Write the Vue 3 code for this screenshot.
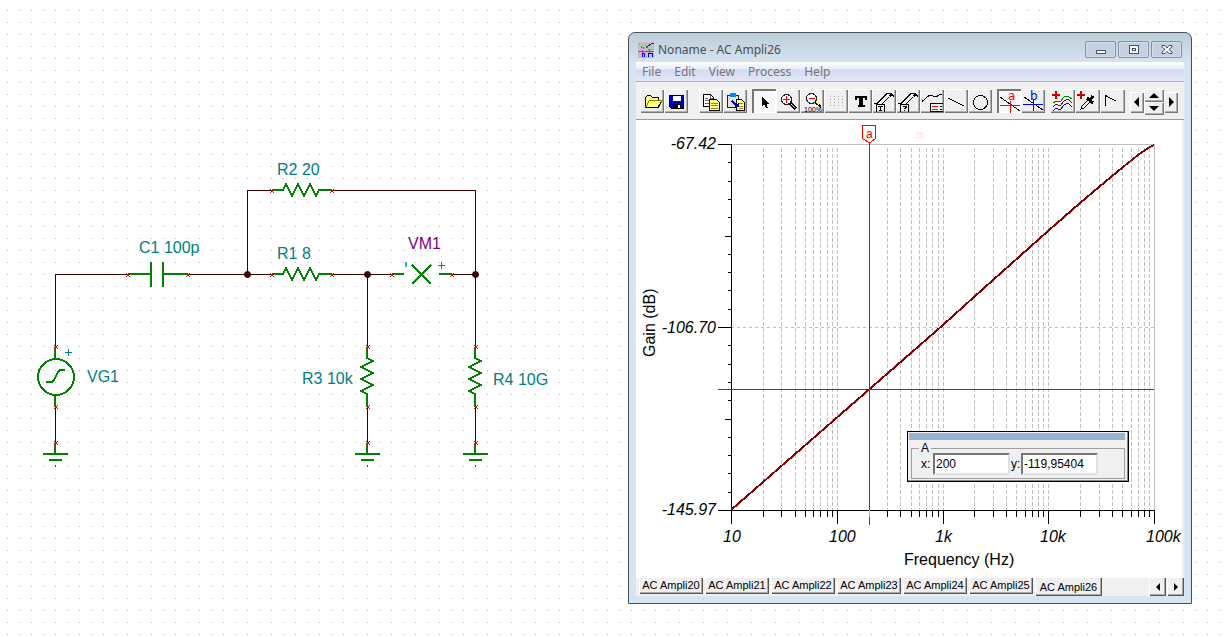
<script setup>
import { ref } from 'vue'

const X0 = 95
const DECADE = 105.75
const TOP = 24
const BOTTOM = 390

const xAt = (hz) => Math.round(X0 + Math.log10(hz / 10) * DECADE) + 0.5

const gridX = []
for (let d = 0; d < 4; d++) {
  for (let m = 1; m < 10; m++) {
    if (d || m > 1) gridX.push({ x: xAt(m * 10 ** (d + 1)), major: m === 1 })
  }
}
const ticksX = [{ x: X0 + 0.5, major: true }, ...gridX, { x: xAt(100000), major: true }]
const ticksY = Array.from({ length: 21 }, (_, i) => ({
  y: Math.round(TOP + (i * (BOTTOM - TOP)) / 20) + 0.5,
  len: i % 10 === 0 ? 13 : i % 5 === 0 ? 6 : 3,
}))

const yLabels = [
  { t: '-67.42', y: 29 },
  { t: '-106.70', y: 213 },
  { t: '-145.97', y: 395 },
]
const xLabels = [
  { t: '10', x: 87 },
  { t: '100', x: 193 },
  { t: '1k', x: 299 },
  { t: '10k', x: 404 },
  { t: '100k', x: 510 },
]

const menus = ['File', 'Edit', 'View', 'Process', 'Help']
const tabs = [20, 21, 22, 23, 24, 25, 26].map((n) => `AC Ampli${n}`)
const active = ref('AC Ampli26')
const ax = ref('200')
const ay = ref('-119,95404')

const pins = [
  [128, 274], [188, 274], [272, 274], [332, 274], [392, 274], [452, 274], [272, 190], [332, 190],
  [56, 346], [56, 406], [56, 442], [368, 346], [368, 406], [368, 442], [476, 346], [476, 406], [476, 442],
]
const labels = [
  { t: 'C1 100p', x: 139, y: 253 },
  { t: 'R2 20', x: 277, y: 175 },
  { t: 'R1 8', x: 277, y: 259 },
  { t: 'VG1', x: 87, y: 382 },
  { t: 'R3 10k', x: 302, y: 384 },
  { t: 'R4 10G', x: 493, y: 385 },
]
</script>

<template>
  <main class="desk">
    <svg class="schematic" viewBox="0 0 628 637" role="img" aria-label="Circuit schematic">
      <g class="wire">
        <path d="M55.5 347V274.5H128M188 274.5H272M332 274.5H392M452 274.5H475.5M247.5 274V190.5H272M332 190.5H475.5V347" />
        <path d="M55.5 407V443M367.5 274V347M367.5 407V443M475.5 407V443" />
      </g>
      <g class="part">
        <path d="M128 274H151M163 274H188M151 262V287M163 262V287" />
        <path d="M55 347V358M55 396V407M46 382H52L54 380L58 372L60 370H65" />
        <circle cx="56" cy="377" r="18" />
        <path v-for="y in [190, 274]" :key="y" :transform="`translate(272 ${y})`" d="M0 0H11L14 -6L20 6L26 -6L32 6L38 -6L44 6L47 0H60" />
        <path v-for="x in [367, 475]" :key="x" :transform="`translate(${x} 347)`" d="M0 0V11L6 14L-6 20L6 26L-6 32L6 38L-6 44L0 47V60" />
        <path v-for="x in [55, 367, 475]" :key="'g' + x" :transform="`translate(${x} 443)`" d="M0 0V11M-12 11H13M-6 17H7M0 23H1" />
        <path d="M392 274H404M439 274H452M412 265L431 284M431 265L412 284" />
      </g>
      <g class="joint">
        <circle cx="247.5" cy="274.5" r="3" />
        <circle cx="367.5" cy="274.5" r="3" />
        <circle cx="475.5" cy="274.5" r="3" />
      </g>
      <path v-for="(p, i) in pins" :key="i" class="pin" :transform="`translate(${p[0]} ${p[1]})`" d="M-2 -1L2 3M2 -1L-2 3" />
      <path class="sign" d="M65 352.500H72M68.500 349V356M438 265.500H445M441.500 262V269" />
      <path class="minus" d="M406 262V267" />
      <text v-for="l in labels" :key="l.t" :x="l.x" :y="l.y">{{ l.t }}</text>
      <text class="meter" x="408" y="249">VM1</text>
    </svg>

    <section class="window" aria-label="Noname - AC Ampli26">
      <header class="title">
        <svg class="logo" viewBox="0 0 16 16" width="16" height="16" aria-hidden="true">
          <path d="M0 0H16V16H0Z" fill="#c0c0c0" />
          <g fill="none" stroke-width="1">
            <path d="M1 2L5 6.500L8 3L10 7H14" stroke="#0c3" stroke-dasharray="2 1" />
            <path d="M8 6L12 2.500L16 1" stroke="#800060" />
            <path d="M0 9.500H16M4.500 8V11M11.500 8V11" stroke="#f0f" />
            <path d="M4.500 15V11.500H6.500V15M10.500 15V11.500H14.500V15" stroke="#00f" />
          </g>
        </svg>
        <h1>Noname - AC Ampli26</h1>
        <div class="caption">
          <button type="button" aria-label="Minimize">
            <svg viewBox="0 0 12 10" width="12" height="10"><rect x="1.500" y="5.500" width="9" height="3" /></svg>
          </button>
          <button type="button" aria-label="Restore">
            <svg viewBox="0 0 12 10" width="12" height="10"><rect x="1.500" y=".5" width="9" height="8" /><rect x="4.500" y="3.500" width="3" height="2" /></svg>
          </button>
          <button type="button" aria-label="Close">
            <svg viewBox="0 0 12 10" width="12" height="10"><path d="M1 .5H4L6 3L8 .5H11V2L8 4.500L11 7V8.500H8L6 6.500L4 8.500H1V7L4 4.500L1 2Z" /></svg>
          </button>
        </div>
      </header>

      <nav class="menu" aria-label="Menu">
        <button v-for="m in menus" :key="m" type="button">{{ m }}</button>
      </nav>

      <div class="toolbar" role="toolbar" aria-label="Diagram tools">
        <div class="group">
          <button type="button" aria-label="Open">
            <svg viewBox="0 0 24 24"><path d="M5.500 18.500V8.500L7.500 6.500H10.500L12.500 8.500H18.500V11.500" fill="#ff8" stroke="#000" /><path d="M5.500 18.500L9.500 11.500H22.500L18.500 18.500Z" fill="#ffff80" stroke="#880" /><path d="M5 18.500H18L21 13" fill="none" stroke="#000" /></svg>
          </button>
          <button type="button" aria-label="Save">
            <svg viewBox="0 0 24 24"><path d="M5.500 6.500H19.500V19.500H7.500L5.500 17.500Z" fill="#00c" stroke="#000" /><path d="M9 7H17V12H9Z" fill="#fff" /><path d="M9 15H17V19H9Z" fill="#000" /><path d="M14 16H16V19H14Z" fill="#fff" /></svg>
          </button>
        </div>
        <div class="group copy">
          <button type="button" aria-label="Copy">
            <svg viewBox="0 0 24 24"><path d="M4.500 5.500H11.500L14.500 8.500V17.500H4.500Z" fill="#fff" stroke="#000" /><path d="M11 5.500V9H14M6 9.500H9M6 11.500H10M6 14.500H10" fill="none" stroke="#666" /><path d="M10.500 10.500H17.500L20.500 13.500V21.500H10.500Z" fill="#ff8" stroke="#000" /><path d="M12 14.500H19M12 16.500H19M12 19.500H19" stroke="#a80" /></svg>
          </button>
          <button type="button" aria-label="Paste">
            <svg viewBox="0 0 24 24"><path d="M4.500 6.500H15.500V18.500H4.500Z" fill="#e4e4e4" stroke="#222" /><path d="M7 4H13V8H7Z" fill="#08f" /><path d="M13.500 10.500H18.500L21.500 13.500V21.500H13.500Z" fill="#ff8" stroke="#000" /><path d="M16 14.500H20M16 17.500H20M16 19.500H20" stroke="#a80" /><path d="M9 12L14 17" stroke="#00a" stroke-width="2" /><path d="M16 13V18H11Z" fill="#00a" /></svg>
          </button>
        </div>
        <div class="group">
          <button type="button" class="down" aria-label="Select" aria-pressed="true">
            <svg viewBox="0 0 24 24"><path d="M10 8V17L12 15L14 19H16L14.500 15H17Z" fill="#000" /></svg>
          </button>
          <button type="button" aria-label="Zoom in">
            <svg viewBox="0 0 24 24"><circle cx="10.500" cy="10.500" r="5" fill="#fff" stroke="#222" /><path d="M7 10.500H14M10.500 7V14" stroke="#f00" /><path d="M14.500 14.500L20 20" stroke="#000" stroke-width="3" /><path d="M15 15L19 19" stroke="#ff0" /></svg>
          </button>
          <button type="button" aria-label="Zoom 100%">
            <svg viewBox="0 0 24 24"><circle cx="11.500" cy="9.500" r="5" fill="#fff" stroke="#222" /><path d="M8.500 9.500H15" stroke="#f00" /><path d="M15 13L21 18" stroke="#000" stroke-width="2" /><path d="M16 13L19 16" stroke="#ff0" /><text x="4" y="23" class="tiny">100%</text></svg>
          </button>
          <button type="button" aria-label="Grid">
            <svg viewBox="0 0 24 24"><path v-for="y in [7.5, 10.5, 13.5, 16.5]" :key="y" :d="`M6 ${y}H19`" stroke="#aaa" stroke-dasharray="1 3" /></svg>
          </button>
          <button type="button" aria-label="Text">
            <svg viewBox="0 0 24 24"><path d="M7 7H19V11H17.500L17 9H15V16H16.500V18H9.500V16H11V9H9L8.500 11H7Z" fill="#000" /></svg>
          </button>
          <button type="button" aria-label="Curve label">
            <svg viewBox="0 0 24 24"><g fill="none" stroke="#000"><path d="M2 14.500H5L12 7.500L15 4.500H19L22 7.500M10 15L17 8" /><path d="M4.500 22.500V15.500H12.500V22.500" /><path d="M6 17.500H11M8.500 17V22M7 21.500H10" /></g><path d="M16 6L20 5L19 9Z" fill="#000" /></svg>
          </button>
          <button type="button" aria-label="Curve query">
            <svg viewBox="0 0 24 24"><g fill="none" stroke="#000"><path d="M2 14.500H5L12 7.500L15 4.500H19L22 7.500M10 15L17 8" /><path d="M4.500 22.500V15.500H12.500V22.500" /><path d="M7 17.500H10.500V18.500L8.500 19.500V20M8.500 21V22" /></g><path d="M16 6L20 5L19 9Z" fill="#000" /></svg>
          </button>
          <button type="button" aria-label="Legend">
            <svg viewBox="0 0 24 24"><path d="M2 12.500L4 11L9 6.500H12L16 8L20 5.500L22 5M10.500 22.500V14.500H23M10 22.500H23" fill="none" stroke="#000" /><path d="M12 17.500H18" stroke="#f00" /><path d="M12 20.500H18" stroke="#080" /><path d="M20 17.500H22M20 20.500H22" stroke="#000" /></svg>
          </button>
          <button type="button" aria-label="Line">
            <svg viewBox="0 0 24 24"><path d="M4 9L20 17" stroke="#000" /></svg>
          </button>
          <button type="button" aria-label="Circle">
            <svg viewBox="0 0 24 24"><circle cx="12.500" cy="13.500" r="7" fill="none" stroke="#000" /></svg>
          </button>
        </div>
        <div class="group">
          <button type="button" class="down" aria-label="Cursor a" aria-pressed="true">
            <svg viewBox="0 0 24 24"><path d="M3 8L23 22" stroke="#000" /><path d="M3 16.500H23M13.500 12V24" stroke="#f00" /><text x="11" y="11" class="mark red">a</text></svg>
          </button>
          <button type="button" aria-label="Cursor b">
            <svg viewBox="0 0 24 24"><path d="M3 8L22 21" stroke="#000" /><path d="M2 15.500H22M12.500 11V22" stroke="#00f" /><text x="9" y="11" class="mark blue">b</text></svg>
          </button>
        </div>
        <div class="group wide">
          <button type="button" aria-label="Add curves">
            <svg viewBox="0 0 24 24"><path d="M2 6H10M6 2V10" stroke="#c00" stroke-width="2" /><g fill="none"><path d="M3 14L6 12L10 13L14 8L18 7L22 10" stroke="#080" /><path d="M3 18L6 15L10 17L14 12L18 10L22 14" stroke="#800" /><path d="M3 22L6 19L10 21L14 16L18 14L22 18" stroke="#00f" /></g></svg>
          </button>
          <button type="button" aria-label="Pick curve">
            <svg viewBox="0 0 24 24"><path d="M2 6H10M6 2V10" stroke="#c00" stroke-width="2" /><path d="M6 20L7 17L13 11L15 13L9 19Z" fill="#eee" stroke="#000" /><path d="M12 9L18 14M14 12L18 7" stroke="#000" stroke-width="3" /></svg>
          </button>
          <button type="button" aria-label="Amplifier">
            <svg viewBox="0 0 24 24"><path d="M5.500 18V6.500L17 12.500" fill="none" stroke="#000" /><path d="M17 12.500L5.500 18" stroke="#fff" /></svg>
          </button>
        </div>
        <div class="nudge">
          <button type="button" aria-label="Left"><svg viewBox="0 0 6 10" width="6" height="10"><path d="M5 0V10L0 5Z" /></svg></button>
          <div class="stack">
            <button type="button" aria-label="Up"><svg viewBox="0 0 10 5" width="10" height="5"><path d="M0 5H10L5 0Z" /></svg></button>
            <button type="button" aria-label="Down"><svg viewBox="0 0 10 5" width="10" height="5"><path d="M0 0H10L5 5Z" /></svg></button>
          </div>
          <button type="button" aria-label="Right"><svg viewBox="0 0 6 10" width="6" height="10"><path d="M1 0V10L6 5Z" /></svg></button>
        </div>
      </div>

      <div class="plot">
        <svg class="chart" viewBox="0 0 548 458" role="img" aria-label="Gain over frequency">
          <g class="grid">
            <path v-for="g in gridX" :key="g.x" :d="`M${g.x} 28V390`" />
            <path d="M95 207.500H518" />
          </g>
          <path class="edge" d="M95 24.500H518.500V390" />
          <g class="axis">
            <path d="M95.500 24V391M95 390.500H519" />
            <path v-for="t in ticksX" :key="t.x" :d="`M${t.x} 390V${t.major ? 404 : 397}`" />
            <path v-for="t in ticksY" :key="t.y" :d="`M95 ${t.y}H${95 - t.len}`" />
          </g>
          <path class="curve" d="M95 390L307 205L338 177L412 111L444 83L463 67L487 47L502 35L512 28L518 25" />
          <path class="cursor" d="M233.500 23V405M82 269.500H518" />
          <path class="cyan" d="M233.500 390V397" />
          <path class="flag" d="M226.500 5.500H239.500V18.500L233.500 23L226.500 18.500Z" />
          <text class="flagtext" x="230" y="18">a</text>
          <path class="ghost" d="M280 12.500H287M281 14.500H287M280 17.500H287M286.500 12V18" />
          <g class="values">
            <text v-for="l in yLabels" :key="l.t" x="80" :y="l.y" text-anchor="end">{{ l.t }}</text>
            <text v-for="l in xLabels" :key="l.t" :x="l.x" y="422">{{ l.t }}</text>
          </g>
          <text x="268" y="445">Frequency (Hz)</text>
          <text transform="translate(19 237) rotate(-90)">Gain (dB)</text>
        </svg>

        <form class="readout" @submit.prevent>
          <div class="bar"></div>
          <fieldset>
            <legend>A</legend>
            <label for="ax">x:</label>
            <input id="ax" v-model="ax" type="text" />
            <label for="ay">y:</label>
            <input id="ay" v-model="ay" type="text" />
          </fieldset>
        </form>
      </div>

      <footer class="tabs">
        <div class="tablist" role="tablist">
          <button
            v-for="t in tabs"
            :key="t"
            type="button"
            role="tab"
            :aria-selected="t === active"
            :class="{ on: t === active }"
            @click="active = t"
          >{{ t }}</button>
        </div>
        <div class="scroll">
          <button type="button" aria-label="Previous tabs"><svg viewBox="0 0 4 8" width="4" height="8"><path d="M4 0V8L0 4Z" /></svg></button>
          <button type="button" aria-label="Next tabs"><svg viewBox="0 0 4 8" width="4" height="8"><path d="M0 0V8L4 4Z" /></svg></button>
        </div>
      </footer>
    </section>
  </main>
</template>

<style>
body {
  background: #fff;
}
</style>

<style scoped>
.desk {
  display: grid;
  grid-template-columns: minmax(0, 628fr) minmax(0, 564fr);
  align-items: start;
  min-height: 100vh;
  box-sizing: border-box;
  padding-right: 38px;
  font-family: "Liberation Sans", Arial, sans-serif;
  background: conic-gradient(from 0deg at 1px 1px, transparent 270deg, #b4b4b4 0) 7px 10px / 12px 12px;
}
button {
  box-sizing: border-box;
  margin: 0;
  padding: 0;
  font: inherit;
  color: inherit;
}
svg {
  display: block;
}
.schematic {
  width: 100%;
  font-size: 16px;
  fill: #008080;
}
.schematic path,
.schematic circle {
  fill: none;
  shape-rendering: crispEdges;
}
.wire {
  stroke: #380000;
}
.part {
  stroke: #008000;
  stroke-width: 2;
}
.schematic .joint circle {
  fill: #380000;
  stroke: #380000;
  shape-rendering: auto;
}
.pin {
  stroke: #e00000;
}
.sign {
  stroke: #008080;
}
.minus {
  stroke: #30b0d0;
  stroke-width: 2;
}
.meter {
  fill: #800080;
}

.window {
  margin-top: 32px;
  padding: 0 7px 7px;
  border: 1px solid #4a4d52;
  border-radius: 7px 7px 0 0;
  background: linear-gradient(#bdccd9, #d7e4f2 30px);
}
.title {
  display: flex;
  align-items: center;
  height: 29px;
  padding: 4px 2px 0 2px;
  box-sizing: border-box;
}
.title h1 {
  flex: 1;
  margin: 0 0 0 4px;
  font: 12px "Noto Sans", "Open Sans", sans-serif;
  color: #4b4f55;
}
.logo {
  shape-rendering: crispEdges;
}
.caption {
  display: flex;
  gap: 2px;
}
.caption button {
  display: grid;
  place-items: center;
  width: 31px;
  height: 17px;
  border: 1px solid #8492aa;
  border-radius: 2px;
  background: #c3d1e0;
  box-shadow: inset 0 0 0 1px #d3deea;
}
.caption svg {
  fill: #f6f8fa;
  stroke: #4c5062;
}
.menu {
  display: flex;
  gap: 13px;
  height: 20px;
  box-sizing: border-box;
  padding-left: 6px;
  border-bottom: 1px solid #aeb3c4;
  background: linear-gradient(#fff, #e9edf8 7px, #d4daef 8px, #e2e7f7);
  font: 12px/19px "Noto Sans", "Open Sans", sans-serif;
  color: #73767d;
}
.menu button {
  border: 0;
  background: none;
}

.toolbar {
  display: flex;
  align-items: flex-start;
  gap: 5px;
  height: 38px;
  padding: 7px 4px 0;
  box-sizing: border-box;
  border-bottom: 1px solid #9a9a9a;
  background: #f0f0f0;
}
.group {
  display: flex;
}
.copy {
  margin-left: 6px;
}
.group button,
.nudge button {
  border: 0;
  background: #f0f0f0;
  box-shadow: inset 1px 1px #fff, inset -1px -1px #777, inset -2px -2px #b0b0b0;
}
.group button {
  width: 24px;
  height: 24px;
}
.wide button {
  width: 25px;
}
.group .down {
  background: #f8f8f8;
  box-shadow: inset 2px 2px #777, inset -1px -1px #fff;
}
.group svg {
  width: 24px;
  height: 24px;
  shape-rendering: crispEdges;
}
.tiny {
  font-size: 7px;
}
.mark {
  font: 12px "DejaVu Sans", sans-serif;
}
.red {
  fill: #f00;
}
.blue {
  fill: #00f;
}
.nudge {
  display: flex;
  align-items: center;
}
.nudge > button {
  width: 14px;
  height: 21px;
}
.stack {
  display: grid;
}
.stack button {
  width: 20px;
  height: 13px;
}
.nudge svg {
  margin: 0 auto;
}

.plot {
  position: relative;
  border-right: 2px solid #f0f0f0;
  background: #fff;
}
.chart {
  width: calc(100% + 2px);
  font-size: 16px;
}
.chart path {
  fill: none;
  shape-rendering: crispEdges;
}
.grid {
  stroke: #c0c0c0;
  stroke-dasharray: 4 2;
}
.grid path:last-child {
  stroke-dasharray: 3 3;
}
.edge {
  stroke: #c0c0c0;
}
.axis {
  stroke: #000;
}
.curve {
  stroke: #800000;
  stroke-width: 2;
}
.cursor {
  stroke: #f00000;
}
.cyan {
  stroke: #0ff;
}
.flag {
  stroke: #f00;
}
.flagtext {
  font-size: 12px;
  fill: #e00;
}
.ghost {
  stroke: #ffd8e4;
  stroke-dasharray: 2 1;
}
.values {
  font-style: italic;
}
.readout {
  position: absolute;
  right: 53px;
  bottom: 96px;
  width: 222px;
  height: 51px;
  box-sizing: border-box;
  padding: 1px 3px 3px 1px;
  border: 1px solid #000;
  background: #f0f0f0;
  box-shadow: inset -1px -1px #888;
  font-size: 12px;
}
.bar {
  height: 7px;
  margin-bottom: 2px;
  background: #99b4d1;
}
fieldset {
  display: flex;
  align-items: center;
  min-width: 0;
  height: 37px;
  box-sizing: border-box;
  margin: 0 0 0 2px;
  padding: 0 0 4px 9px;
  border: 1px solid #a0a0a0;
}
legend {
  padding: 0 2px;
  margin-left: -2px;
  line-height: 12px;
}
label {
  width: 12px;
}
label + input + label {
  padding-left: 1px;
  width: 10px;
}
input {
  width: 77px;
  height: 22px;
  box-sizing: border-box;
  padding: 0 1px;
  border: 2px solid;
  border-color: #777 #e0e0e0 #e0e0e0 #777;
  background: #fff;
  font: 12px "Liberation Sans", Arial, sans-serif;
}

.tabs {
  display: flex;
  justify-content: space-between;
  align-items: flex-start;
  height: 18px;
  background: #f0f0f0;
}
.tablist {
  display: flex;
  gap: 2px;
  padding-left: 3px;
}
.tabs button {
  border: 0;
  background: #f0f0f0;
  box-shadow: inset 1px 0 #fff, inset -1px -1px #555, inset -2px -2px #aaa;
}
.tablist button {
  width: 64px;
  height: 16px;
  padding-bottom: 2px;
  font-size: 11px;
  line-height: 14px;
  white-space: nowrap;
}
.tablist .on {
  width: 67px;
  height: 18px;
  padding-bottom: 0;
  line-height: 18px;
}
.scroll {
  display: flex;
  gap: 1px;
}
.scroll button {
  width: 17px;
  height: 18px;
}
.scroll svg {
  margin: 0 auto;
}
</style>
